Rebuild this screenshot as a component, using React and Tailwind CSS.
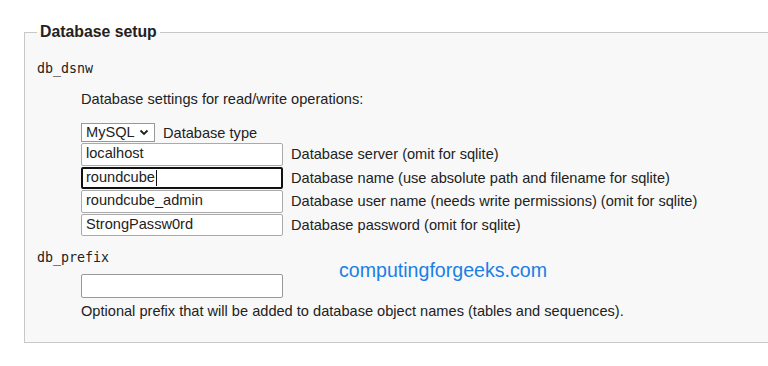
export default function App() {
  const rows = [
    { value: "localhost", label: "Database server (omit for sqlite)" },
    { value: "roundcube", label: "Database name (use absolute path and filename for sqlite)", focus: true },
    { value: "roundcube_admin", label: "Database user name (needs write permissions) (omit for sqlite)" },
    { value: "StrongPassw0rd", label: "Database password (omit for sqlite)" },
  ];

  return (
    <div className="w-[768px] h-[366px] overflow-hidden bg-white text-[#222] font-['Liberation_Sans',Arial,sans-serif]">
      <fieldset className="ml-[24px] mt-[23px] w-[780px] h-[320px] border border-[#c8c8c8] bg-[#f8f8f8] p-0 m-0">
        <legend className="ml-[12px] px-[3px] text-[15.8px] leading-[18px] font-bold text-[#222]">
          Database setup
        </legend>

        <div className="relative pl-[12px] pt-[20px]">
          {/* db_dsnw */}
          <div className="font-['DejaVu_Sans_Mono',monospace] text-[13.3px] leading-[16px]">db_dsnw</div>

          <div className="pl-[44px]">
            <p className="mt-[14px] text-[14.6px] leading-[16px]">Database settings for read/write operations:</p>

            <div className="mt-[16px] flex items-center">
              <div className="h-[19px] w-[74px] flex items-center justify-between border border-[#999] bg-white px-[4px] text-[14.6px]">
                <span>MySQL</span>
                <svg width="10" height="7" viewBox="0 0 10 7" className="mr-[1px]">
                  <path d="M1.5 1.5 L5 5 L8.5 1.5" fill="none" stroke="#222" strokeWidth="1.8" />
                </svg>
              </div>
              <span className="ml-[8px] text-[14.6px] leading-[16px]">Database type</span>
            </div>

            <div className="mt-[1px] flex flex-col gap-[1px]">
              {rows.map((r) => (
                <div key={r.value} className="flex items-center">
                  <div
                    className={
                      r.focus
                        ? "h-[22.5px] w-[202px] flex items-center rounded-[2px] border-2 border-[#111] bg-white pl-[3px] text-[14.6px]"
                        : "h-[22.5px] w-[202px] flex items-center rounded-[2px] border border-[#aaa] bg-white pl-[4px] text-[14.6px]"
                    }
                  >
                    {r.value}
                    {r.focus && <span className="ml-[1px] inline-block h-[16px] w-[1px] bg-[#111]" />}
                  </div>
                  <span className="ml-[8px] text-[14.6px] leading-[16px]">{r.label}</span>
                </div>
              ))}
            </div>
          </div>

          {/* db_prefix */}
          <div className="mt-[14px] font-['DejaVu_Sans_Mono',monospace] text-[13.3px] leading-[16px]">db_prefix</div>
          <div className="pl-[44px]">
            <div className="mt-[8px] h-[24px] w-[202px] rounded-[2px] border border-[#999] bg-white" />
            <p className="mt-[5px] text-[14.6px] leading-[16px]">
              Optional prefix that will be added to database object names (tables and sequences).
            </p>
          </div>

          {/* watermark */}
          <span className="absolute left-[314px] top-[218px] text-[19.6px] leading-[22px] text-[#1a7fe6]">
            computingforgeeks.com
          </span>
        </div>
      </fieldset>
    </div>
  );
}
